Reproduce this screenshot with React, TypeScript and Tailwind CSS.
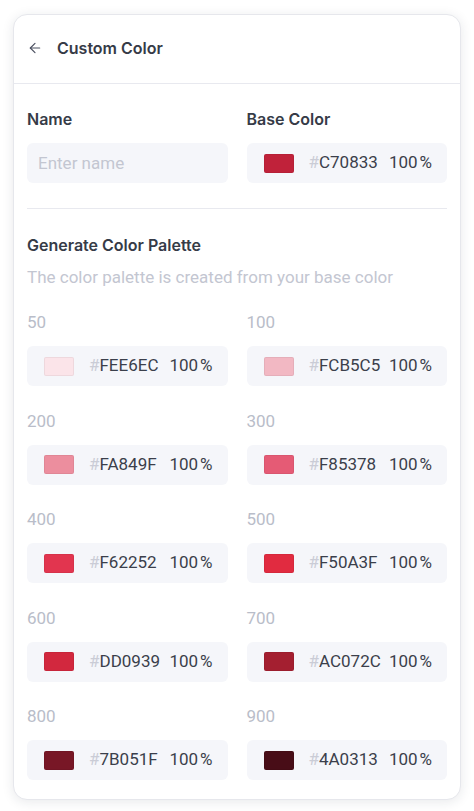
import { ArrowLeft } from "lucide-react";

// hex is the value shown, tint is how the swatch renders in the design
const PALETTE = [
  { step: "50", hex: "FEE6EC", tint: "#fbe4e9" },
  { step: "100", hex: "FCB5C5", tint: "#f2b8c3" },
  { step: "200", hex: "FA849F", tint: "#ec8e9e" },
  { step: "300", hex: "F85378", tint: "#e55b75" },
  { step: "400", hex: "F62252", tint: "#e2354f" },
  { step: "500", hex: "F50A3F", tint: "#e12b40" },
  { step: "600", hex: "DD0939", tint: "#d2283e" },
  { step: "700", hex: "AC072C", tint: "#a41f30" },
  { step: "800", hex: "7B051F", tint: "#781726" },
  { step: "900", hex: "4A0313", tint: "#480d17" },
];

function ColorValue({ hex, tint }: { hex: string; tint: string }) {
  return (
    <div className="flex h-10 items-center rounded-md bg-[#f5f6fa] pl-[17px] font-['Roboto',sans-serif] text-[17px]">
      <span
        className="h-[19px] w-[30px] shrink-0 rounded-[2px] border border-black/5"
        style={{ backgroundColor: tint }}
      />
      <span className="ml-[15px] text-[#caccd6]">#</span>
      <span className="text-[#3b3f4b]">{hex}</span>
      <span className="ml-auto mr-[15px] text-[#3b3f4b]">
        100<span className="ml-[2px]">%</span>
      </span>
    </div>
  );
}

export default function App() {
  return (
    <div className="min-h-[811px] bg-white px-[13px] pt-[14px] pb-3">
      <div className="overflow-hidden rounded-[14px] border border-[#e6e7ec] bg-white shadow-[0_2px_12px_rgba(30,35,60,0.10)]">
        {/* Header */}
        <div className="flex h-[69px] items-center gap-[14px] border-b border-[#e8e9ef] px-[13px]">
          <ArrowLeft className="-mt-[2px] h-4 w-4 text-[#4b5060]" strokeWidth={1.75} />
          <h1 className="-mt-[2px] font-['Inter',sans-serif] text-base font-semibold text-[#363b47]">
            Custom Color
          </h1>
        </div>

        <div className="px-[13px] pt-[23px] pb-[19px]">
          {/* Name / Base color */}
          <div className="grid grid-cols-2 gap-x-[19px]">
            <div>
              <label className="block h-6 font-['Inter',sans-serif] text-base leading-6 font-semibold text-[#363b47]">
                Name
              </label>
              <input
                placeholder="Enter name"
                className="mt-3 h-10 w-full rounded-md bg-[#f5f6fa] px-[11px] font-['Roboto',sans-serif] text-[17px] text-[#3b3f4b] outline-none placeholder:text-[#c3c6d1]"
              />
            </div>
            <div>
              <label className="block h-6 font-['Inter',sans-serif] text-base leading-6 font-semibold text-[#363b47]">
                Base Color
              </label>
              <div className="mt-3">
                <ColorValue hex="C70833" tint="#c0223a" />
              </div>
            </div>
          </div>

          <div className="mt-[25px] h-px bg-[#e8e9ef]" />

          {/* Palette */}
          <h2 className="mt-[24px] font-['Inter',sans-serif] text-base leading-6 font-semibold text-[#363b47]">
            Generate Color Palette
          </h2>
          <p className="mt-[8px] font-['Roboto',sans-serif] text-[17px] leading-6 text-[#c3c6d1]">
            The color palette is created from your base color
          </p>

          <div className="mt-[21px] grid grid-cols-2 gap-x-[19px] gap-y-[22.5px]">
            {PALETTE.map((c) => (
              <div key={c.step}>
                <div className="h-6 font-['Roboto',sans-serif] text-[17px] leading-6 text-[#b9bdc9]">
                  {c.step}
                </div>
                <div className="mt-3">
                  <ColorValue hex={c.hex} tint={c.tint} />
                </div>
              </div>
            ))}
          </div>
        </div>
      </div>
    </div>
  );
}
